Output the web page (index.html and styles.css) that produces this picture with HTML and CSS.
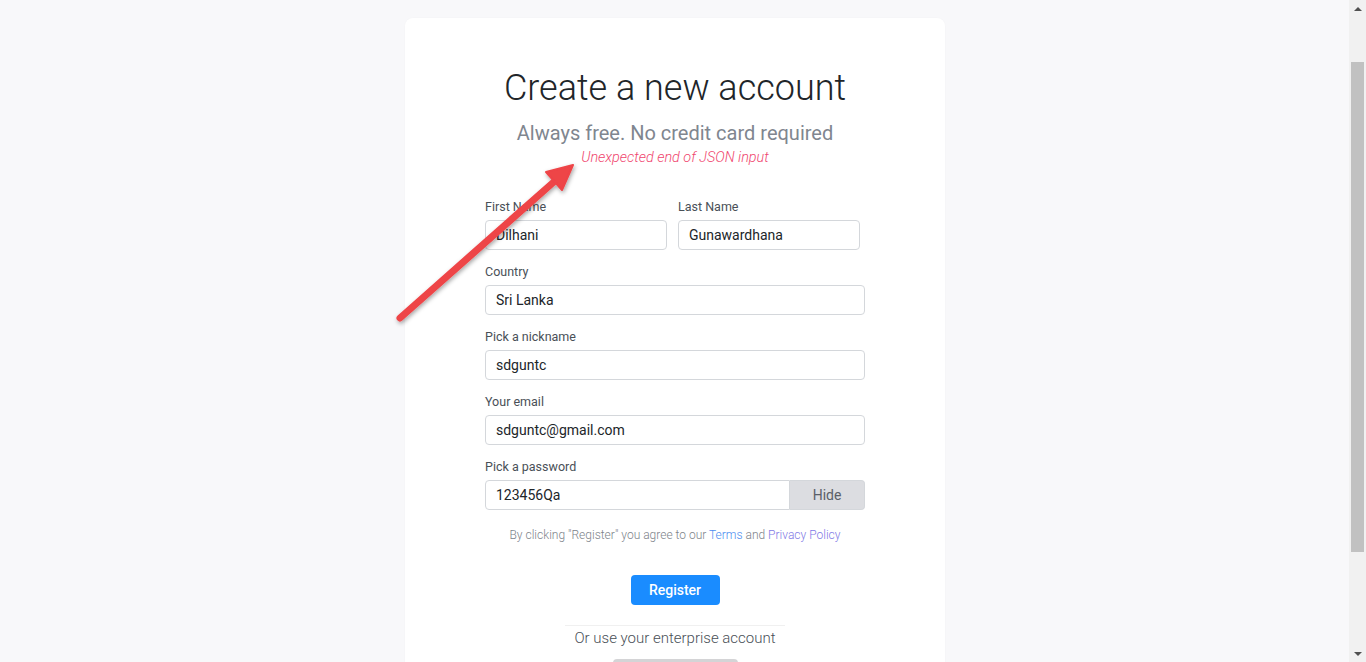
FILE: index.html
```html
<!DOCTYPE html>
<html lang="en">
<head>
<meta charset="utf-8">
<title>Create a new account</title>
<link rel="stylesheet" href="styles.css">
</head>
<body>
<div class="page">
  <main class="main">
    <section class="card">
      <h1 class="title">Create a new account</h1>
      <p class="subtitle">Always free. No credit card required</p>
      <p class="error">Unexpected end of JSON input</p>
      <form class="form">
        <div class="row">
          <div class="group half">
            <label class="label">First Name</label>
            <div class="input">Dilhani</div>
          </div>
          <div class="group half">
            <label class="label">Last Name</label>
            <div class="input">Gunawardhana</div>
          </div>
        </div>
        <div class="group">
          <label class="label">Country</label>
          <div class="input">Sri Lanka</div>
        </div>
        <div class="group">
          <label class="label">Pick a nickname</label>
          <div class="input">sdguntc</div>
        </div>
        <div class="group">
          <label class="label">Your email</label>
          <div class="input">sdguntc@gmail.com</div>
        </div>
        <div class="group">
          <label class="label">Pick a password</label>
          <div class="input-group">
            <div class="input joined">123456Qa</div>
            <div class="addon">Hide</div>
          </div>
        </div>
        <p class="terms">By clicking "Register" you agree to our <a class="link-terms">Terms</a> and <a class="link-privacy">Privacy Policy</a></p>
        <div class="actions"><button class="btn-primary" type="button">Register</button></div>
      </form>
      <div class="enterprise">Or use your enterprise account</div>
      <div class="sso"></div>
    </section>
    <svg class="annotation" width="1349" height="662" viewBox="0 0 1349 662">
      <defs>
        <filter id="sh" x="-20%" y="-20%" width="140%" height="140%">
          <feDropShadow dx="1" dy="2" stdDeviation="2" flood-color="#000" flood-opacity="0.35"/>
        </filter>
      </defs>
      <g filter="url(#sh)" fill="#ee4447" stroke="#ee4447">
        <line x1="400" y1="318" x2="556" y2="180" stroke-width="7" stroke-linecap="round"/>
        <polygon points="573,165 546,172 562,190" stroke-width="2" stroke-linejoin="round"/>
      </g>
    </svg>
  </main>
  <div class="scrollbar">
    <div class="sb-up"></div>
    <div class="sb-track"><div class="sb-thumb"></div></div>
    <div class="sb-down"></div>
  </div>
</div>
</body>
</html>
```
FILE: styles.css
```css
html, body {
  margin: 0;
  padding: 0;
  height: 662px;
  overflow: hidden;
  font-family: Roboto, "Liberation Sans", sans-serif;
}
.page {
  display: flex;
  height: 662px;
}
.main {
  position: relative;
  flex: 1;
  background: #f8f8fa;
  display: flex;
  justify-content: center;
  padding-top: 18px;
  overflow: hidden;
}
.card {
  width: 540px;
  margin-left: 1px;
  background: #fff;
  border-radius: 8px;
  box-shadow: 0 0 2px rgba(0,0,0,0.03);
  padding-top: 48px;
  display: flex;
  flex-direction: column;
  align-items: center;
  height: 700px;
  box-sizing: border-box;
}
.title {
  margin: 0;
  font-size: 36px;
  line-height: 44px;
  font-weight: 300;
  color: #212529;
}
.subtitle {
  margin: 11px 0 0;
  font-size: 20px;
  line-height: 24px;
  font-weight: 400;
  color: #80868f;
}
.error {
  margin: 4px 0 0;
  font-size: 14.4px;
  line-height: 18px;
  font-style: italic;
  font-weight: 300;
  color: #f0466e;
}
.form {
  width: 380px;
  margin-top: 32px;
  display: flex;
  flex-direction: column;
}
.row {
  display: flex;
  gap: 11px;
}
.group {
  display: flex;
  flex-direction: column;
  gap: 5px;
  margin-bottom: 14px;
}
.half {
  width: 182px;
}
.label {
  font-size: 12.5px;
  line-height: 16px;
  color: #495057;
}
.input {
  height: 30px;
  box-sizing: border-box;
  border: 1px solid #d4d7db;
  border-radius: 4px;
  padding: 0 10px;
  font-size: 14px;
  line-height: 28px;
  color: #212529;
  background: #fff;
}
.input-group {
  display: flex;
}
.joined {
  flex: 1;
  border-radius: 4px 0 0 4px;
}
.addon {
  width: 75px;
  height: 30px;
  box-sizing: border-box;
  background: #dcdde1;
  border: 1px solid #d4d7db;
  border-left: none;
  border-radius: 0 4px 4px 0;
  font-size: 14px;
  line-height: 28px;
  text-align: center;
  color: #5a6068;
}
.terms {
  margin: 3px 0 0;
  text-align: center;
  font-size: 12px;
  line-height: 16px;
  font-weight: 300;
  color: #7d838a;
}
.link-terms { color: #4c8df0; }
.link-privacy { color: #7f79e6; }
.actions {
  display: flex;
  justify-content: center;
  margin-top: 32px;
}
.btn-primary {
  width: 89px;
  height: 30px;
  border: none;
  border-radius: 4px;
  background: #1a8cff;
  color: #fff;
  font-family: Roboto, "Liberation Sans", sans-serif;
  font-size: 14px;
  font-weight: 500;
  padding: 0;
}
.enterprise {
  margin-top: 20px;
  width: 220px;
  border-top: 1px solid #f0f0f0;
  padding-top: 3px;
  text-align: center;
  font-size: 15px;
  line-height: 18px;
  font-weight: 300;
  color: #495057;
}
.sso {
  margin-top: 12px;
  width: 125px;
  height: 30px;
  border-radius: 4px;
  background: #d4d4d6;
}
.annotation {
  position: absolute;
  left: 0;
  top: 0;
  pointer-events: none;
}
.scrollbar {
  width: 17px;
  background: #f1f1f1;
  display: flex;
  flex-direction: column;
}
.sb-up, .sb-down {
  height: 17px;
  display: flex;
  align-items: center;
  justify-content: center;
}
.sb-up::before {
  content: "";
  border-left: 4px solid transparent;
  border-right: 4px solid transparent;
  border-bottom: 4px solid #505050;
}
.sb-down::before {
  content: "";
  border-left: 4px solid transparent;
  border-right: 4px solid transparent;
  border-top: 4px solid #505050;
}
.sb-track {
  flex: 1;
  padding: 45px 2px 0 2px;
}
.sb-thumb {
  height: 490px;
  background: #c1c1c1;
}
```
